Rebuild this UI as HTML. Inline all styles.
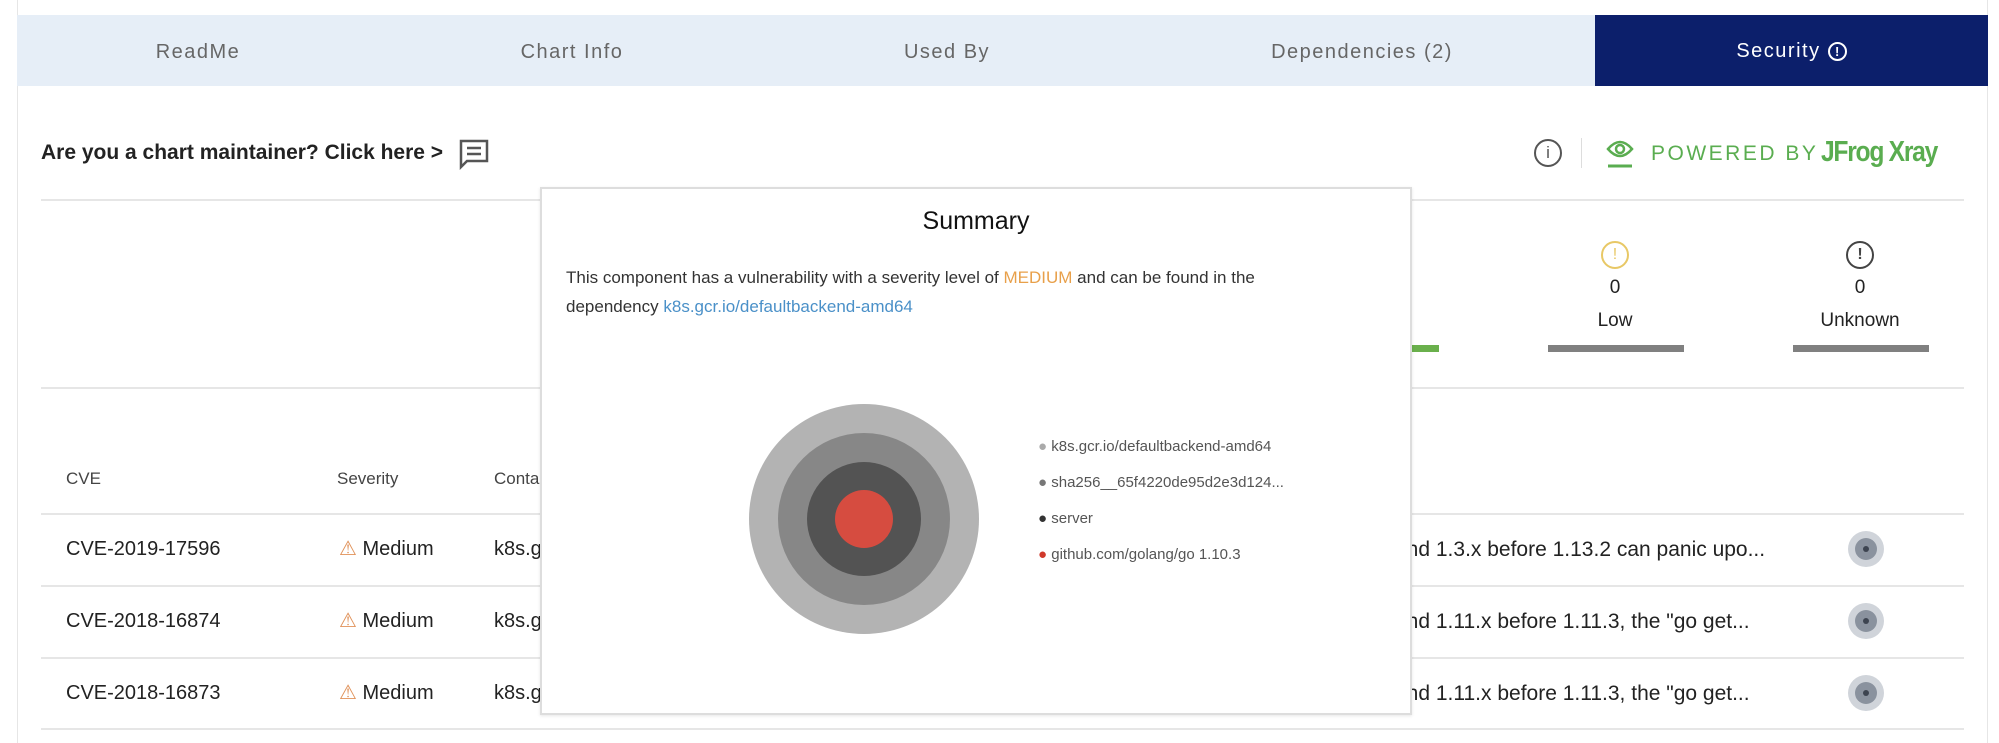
<!DOCTYPE html>
<html><head><meta charset="utf-8"><style>
*{margin:0;padding:0;box-sizing:border-box}
body{width:1999px;height:743px;background:#fff;position:relative;overflow:hidden;font-family:"Liberation Sans",sans-serif;color:#222}
.a{position:absolute;white-space:nowrap}
.page{position:absolute;left:17px;top:0;width:1971px;height:743px;border-left:1px solid #e6e6e6;border-right:1px solid #e6e6e6}
.tabs{position:absolute;left:17px;top:15px;width:1971px;height:71px;background:#e6eef7}
.tab{position:absolute;top:17px;height:71px;line-height:71px;font-size:20px;color:#666;letter-spacing:1.5px;text-align:center;transform:translateX(-50%)}
.hl{position:absolute;height:2px;background:#e6e6e6}
.row{font-size:20px;color:#222}
.bar{position:absolute;height:7px;top:345px;background:#808080}
</style></head><body>
<div class="page"></div>
<div class="tabs"></div>
<div class="tab" style="left:198px">ReadMe</div>
<div class="tab" style="left:572px">Chart Info</div>
<div class="tab" style="left:947px">Used By</div>
<div class="tab" style="left:1362px">Dependencies (2)</div>
<div class="a" style="left:1595px;top:17px;width:393px;height:69px;background:#0c1f6b;color:#fff;font-size:20px;letter-spacing:1.5px;line-height:69px;text-align:center">Security <span style="display:inline-block;width:19px;height:19px;border:2px solid #fff;border-radius:50%;font-size:13px;line-height:15px;letter-spacing:0;vertical-align:1px;font-weight:bold">!</span></div>
<div class="a" style="left:1595px;top:15px;width:393px;height:2px;background:#0c1f6b"></div>

<div class="a" style="left:41px;top:141px;font-size:21px;font-weight:bold;color:#222">Are you a chart maintainer? Click here &gt;</div>
<svg class="a" style="left:458px;top:138px" width="32" height="32" viewBox="0 0 32 32"><path d="M3 3h26v20H9l-6 6z" fill="none" stroke="#555" stroke-width="2.5"/><path d="M9 10h14M9 16h14" stroke="#555" stroke-width="2.5"/></svg>

<div class="a" style="left:1534px;top:139px;width:28px;height:28px;border:2.5px solid #555;border-radius:50%;text-align:center;font-size:17px;line-height:23px;color:#555">i</div>
<div class="a" style="left:1581px;top:138px;width:1px;height:30px;background:#ddd"></div>
<svg class="a" style="left:1606px;top:137px" width="28" height="32" viewBox="0 0 28 32"><path d="M2 12 Q14 -2 26 12 Q14 26 2 12z" fill="none" stroke="#5aad50" stroke-width="2.5"/><circle cx="14" cy="12" r="4" fill="none" stroke="#5aad50" stroke-width="2.5"/><path d="M2 29h24" stroke="#5aad50" stroke-width="3"/></svg>
<div class="a" style="left:1651px;top:142px;font-size:21px;color:#5aad50;letter-spacing:2.5px">POWERED BY</div>
<div class="a" style="left:1821px;top:136px;font-size:29px;font-weight:bold;color:#5aad50;letter-spacing:-1.5px;transform:scaleX(.85);transform-origin:left">JFrog Xray</div>

<div class="hl" style="left:41px;top:199px;width:1923px"></div>
<div class="hl" style="left:41px;top:387px;width:1923px"></div>

<div class="a" style="left:1601px;top:241px;width:28px;height:28px;border:2.5px solid #e8c866;border-radius:50%;text-align:center;font-size:16px;line-height:23px;color:#e8c866">!</div>
<div class="a" style="left:1846px;top:241px;width:28px;height:28px;border:2.5px solid #444;border-radius:50%;text-align:center;font-size:16px;line-height:23px;color:#444;font-weight:bold">!</div>
<div class="a" style="left:1565px;top:277px;width:100px;text-align:center;font-size:19px">0</div>
<div class="a" style="left:1810px;top:277px;width:100px;text-align:center;font-size:19px">0</div>
<div class="a" style="left:1565px;top:310px;width:100px;text-align:center;font-size:19px">Low</div>
<div class="a" style="left:1790px;top:310px;width:140px;text-align:center;font-size:19px">Unknown</div>
<div class="bar" style="left:1380px;width:59px;background:#6ab04c"></div>
<div class="bar" style="left:1548px;width:136px"></div>
<div class="bar" style="left:1793px;width:136px"></div>

<div class="a" style="left:66px;top:469px;font-size:17px;color:#444">CVE</div>
<div class="a" style="left:337px;top:469px;font-size:17px;color:#444">Severity</div>
<div class="a" style="left:494px;top:469px;font-size:17px;color:#444">Contains</div>
<div class="hl" style="left:41px;top:513px;width:1923px"></div>
<div class="hl" style="left:41px;top:585px;width:1923px"></div>
<div class="hl" style="left:41px;top:657px;width:1923px"></div>
<div class="hl" style="left:41px;top:728px;width:1923px"></div>

<div class="a row" style="left:66px;top:538px">CVE-2019-17596</div>
<div class="a row" style="left:66px;top:610px">CVE-2018-16874</div>
<div class="a row" style="left:66px;top:682px">CVE-2018-16873</div>
<div class="a row" style="left:339px;top:536px"><span style="color:#e0925a">⚠</span> Medium</div>
<div class="a row" style="left:339px;top:608px"><span style="color:#e0925a">⚠</span> Medium</div>
<div class="a row" style="left:339px;top:680px"><span style="color:#e0925a">⚠</span> Medium</div>
<div class="a row" style="left:494px;top:538px">k8s.gcr.io</div>
<div class="a row" style="left:494px;top:610px">k8s.gcr.io</div>
<div class="a row" style="left:494px;top:682px">k8s.gcr.io</div>
<div class="a row" style="left:1395px;top:538px;font-size:21px">and 1.3.x before 1.13.2 can panic upo...</div>
<div class="a row" style="left:1395px;top:610px;font-size:21px">and 1.11.x before 1.11.3, the "go get...</div>
<div class="a row" style="left:1395px;top:682px;font-size:21px">and 1.11.x before 1.11.3, the "go get...</div>
<svg class="a" style="left:1848px;top:531px" width="36" height="36"><circle cx="18" cy="18" r="18" fill="#d0d4da"/><circle cx="18" cy="18" r="11" fill="#8a929e"/><circle cx="18" cy="18" r="3" fill="#3d4450"/></svg>
<svg class="a" style="left:1848px;top:603px" width="36" height="36"><circle cx="18" cy="18" r="18" fill="#d0d4da"/><circle cx="18" cy="18" r="11" fill="#8a929e"/><circle cx="18" cy="18" r="3" fill="#3d4450"/></svg>
<svg class="a" style="left:1848px;top:675px" width="36" height="36"><circle cx="18" cy="18" r="18" fill="#d0d4da"/><circle cx="18" cy="18" r="11" fill="#8a929e"/><circle cx="18" cy="18" r="3" fill="#3d4450"/></svg>

<div class="a" style="left:540px;top:187px;width:872px;height:528px;background:#fff;border:2px solid #ddd;box-shadow:0 1px 3px rgba(0,0,0,.1)"></div>
<div class="a" style="left:540px;top:207px;width:872px;text-align:center;font-size:25px;color:#111">Summary</div>
<div class="a" style="left:566px;top:263px;font-size:17px;color:#333;line-height:29px">This component has a vulnerability with a severity level of <span style="color:#e8a04a">MEDIUM</span> and can be found in the<br>dependency <span style="color:#4a90c8">k8s.gcr.io/defaultbackend-amd64</span></div>
<svg class="a" style="left:749px;top:404px" width="230" height="230"><circle cx="115" cy="115" r="115" fill="#b3b3b3"/><circle cx="115" cy="115" r="86" fill="#878787"/><circle cx="115" cy="115" r="57" fill="#535353"/><circle cx="115" cy="115" r="29" fill="#d64c40"/></svg>
<div class="a" style="left:1038px;top:429px;font-size:15px;color:#555;line-height:36px">
<div><span style="color:#aaa">●</span> k8s.gcr.io/defaultbackend-amd64</div>
<div><span style="color:#777">●</span> sha256__65f4220de95d2e3d124...</div>
<div><span style="color:#333">●</span> server</div>
<div><span style="color:#d0392b">●</span> github.com/golang/go 1.10.3</div>
</div>
</body></html>
